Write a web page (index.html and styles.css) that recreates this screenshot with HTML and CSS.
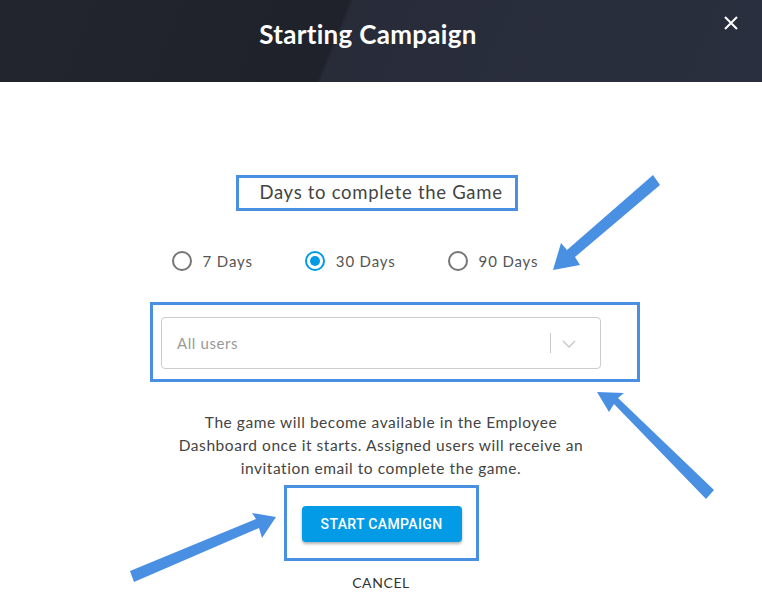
FILE: index.html
```html
<!DOCTYPE html>
<html lang="en">
  <head>
    <meta charset="UTF-8" />
    <title>Starting Campaign</title>
    <link rel="stylesheet" href="styles.css">
  </head>
  <body>
    <header class="modal-head">
      <h1>Starting Campaign</h1>
      <button class="close" aria-label="Close">
        <svg width="14" height="14" viewBox="0 0 14 14">
          <path d="M1 1L13 13M13 1L1 13" stroke="#fff" stroke-width="2" />
        </svg>
      </button>
    </header>

    <main class="modal-body">
      <div class="mark mark-title">
        <h2>Days to complete the Game</h2>
      </div>

      <div class="days">
        <label class="day"><span class="radio"></span>7 Days</label>
        <label class="day"><span class="radio on"></span>30 Days</label>
        <label class="day"><span class="radio"></span>90 Days</label>
      </div>

      <div class="mark mark-select">
        <div class="select">
          <span class="placeholder">All users</span>
          <span class="sep"></span>
          <svg class="chev" width="14" height="8" viewBox="0 0 14 8">
            <path d="M1 1L7 7L13 1" fill="none" stroke="#ccc" stroke-width="1.6" />
          </svg>
        </div>
      </div>

      <p class="info">
        The game will become available in the Employee Dashboard once it
        starts. Assigned users will receive an invitation email to complete
        the game.
      </p>

      <div class="mark mark-btn">
        <button class="start">START CAMPAIGN</button>
      </div>

      <button class="cancel">CANCEL</button>
    </main>

    <svg class="arrows" width="762" height="594" viewBox="0 0 762 594">
      <g fill="#4a90e2">
        <!-- top right arrow -->
        <polygon points="653,175 660,185 575,257 580,265 553,270 561,243 567,250" />
        <!-- middle right arrow -->
        <polygon points="714,490 706,499 614,404 609,412 597,392 624,393 618,398" />
        <!-- bottom left arrow -->
        <polygon points="130,571 134,582 259,528 262,538 276,517 252,513 256,519" />
      </g>
    </svg>
  </body>
</html>
```

FILE: styles.css
```css
body {
  margin: 0;
  padding: 0;
  background: #fff;
  font-family: "Lato", sans-serif;
  color: #444;
}

.modal-head {
  height: 82px;
  display: flex;
  align-items: center;
  justify-content: center;
  background: linear-gradient(112deg, #22252e 0%, #1f222b 44%, #282c39 44.5%, #2a2f3f 100%);
  position: relative;
}

.modal-head h1 {
  margin: 0 26px 14px 0;
  color: #fff;
  font-size: 26px;
  font-weight: 700;
  letter-spacing: 0.3px;
}

.close {
  position: absolute;
  right: 24px;
  top: 16px;
  background: none;
  border: 0;
  padding: 0;
  width: 14px;
  height: 14px;
}

.modal-body {
  display: flex;
  flex-direction: column;
  align-items: center;
  padding-top: 93px;
}

.mark {
  border: 3px solid #4a90e2;
}

.mark-title {
  margin-right: 8px;
  padding: 3px 12px 5px 20px;
}

.mark-title h2 {
  margin: 0;
  font-size: 18.5px;
  font-weight: 400;
  color: #444;
  letter-spacing: 0.7px;
}

.days {
  display: flex;
  margin-top: 40px;
}

.day {
  display: flex;
  align-items: center;
  gap: 11px;
  margin-right: 52px;
  font-size: 15px;
  color: #555;
  letter-spacing: 0.85px;
  height: 20px;
}

.radio {
  width: 16px;
  height: 16px;
  border: 2px solid #757575;
  border-radius: 50%;
  box-sizing: content-box;
  position: relative;
}

.radio.on {
  border-color: #039be5;
}

.radio.on::after {
  content: "";
  position: absolute;
  left: 3px;
  top: 3px;
  width: 10px;
  height: 10px;
  border-radius: 50%;
  background: #039be5;
}

.mark-select {
  margin-top: 31px;
  margin-left: 28px;
  padding: 12px 36px 10px 8px;
}

.select {
  height: 50px;
  border: 1px solid #ccc;
  border-radius: 4px;
  display: flex;
  align-items: center;
  padding-left: 15px;
  box-sizing: content-box;
  width: 423px;
}

.placeholder {
  flex: 1;
  color: #999;
  font-size: 15px;
  letter-spacing: 0.6px;
}

.sep {
  width: 1px;
  height: 20px;
  background: #ccc;
}

.chev {
  margin: 2px 24px 0 11px;
}

.info {
  width: 416px;
  margin: 29px 0 0 0;
  text-align: center;
  font-size: 15.5px;
  line-height: 23px;
  color: #444;
  letter-spacing: 0.55px;
}

.mark-btn {
  margin-top: 5px;
  padding: 18px 14px 16px 15px;
}

.start {
  display: block;
  width: 160px;
  height: 36px;
  border: 0;
  border-radius: 4px;
  background: #039be5;
  color: #fff;
  font-family: "Roboto", sans-serif;
  font-weight: 500;
  font-size: 14px;
  letter-spacing: 0.35px;
  box-shadow: 0 2px 3px rgba(0, 0, 0, 0.3);
}

.cancel {
  margin-top: 13px;
  background: none;
  border: 0;
  padding: 0;
  font-family: "Lato", sans-serif;
  font-size: 14px;
  letter-spacing: 0.6px;
  color: #333;
}

.arrows {
  position: absolute;
  left: 0;
  top: 0;
  pointer-events: none;
}
```
